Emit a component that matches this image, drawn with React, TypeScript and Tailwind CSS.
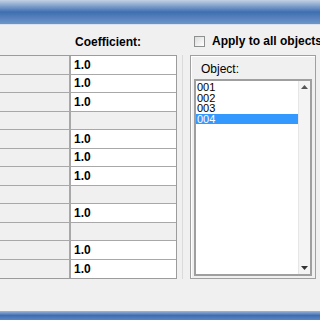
import React from 'react';

const rows = ['1.0', '1.0', '1.0', '', '1.0', '1.0', '1.0', '', '1.0', '', '1.0', '1.0'];
const items = ['001', '002', '003', '004'];

export default function App() {
  return (
    <div className="w-[320px] h-[320px] overflow-hidden bg-[#f0f0f0] flex flex-col font-['Liberation_Sans',Arial,sans-serif] text-black">
      {/* title bar */}
      <div className="h-[25px] shrink-0 bg-gradient-to-b from-[#c3d1e4] via-[#3f6fb0] to-[#6d95c9] border-b border-[#d9e2ee]" />

      <div className="flex flex-1">
        {/* coefficient table */}
        <div className="w-[190px] shrink-0 flex flex-col">
          <div className="h-[30px] flex items-center pl-[75px] pt-[4px] text-[12px] font-bold">Coefficient:</div>
          <div className="flex">
            <div className="w-[177px] border-t border-b border-r border-[#9c9c9c]">
              {rows.map((v, i) => (
                <div key={i} className="h-[18.5px] flex border-b border-[#a8a8a8] last:border-b-0">
                  <div className="w-[71px] bg-[#f0f0f0] border-r-2 border-[#a8a8a8]" />
                  <div className={`flex-1 flex items-center pl-[3px] text-[12px] font-bold ${v ? 'bg-white' : 'bg-[#f0f0f0]'}`}>{v}</div>
                </div>
              ))}
            </div>
            <div className="w-[5px] ml-[1px] border-r border-[#dadada]" />
          </div>
        </div>

        {/* right side */}
        <div className="flex-1 flex flex-col">
          <div className="h-[30px] flex items-center gap-[7px] pl-[4px] pt-[2px]">
            <div className="w-[11px] h-[11px] border border-[#8e8f8f] bg-gradient-to-br from-[#dcdcdc] to-white" />
            <span className="text-[12px] font-bold whitespace-nowrap">Apply to all objects</span>
          </div>
          <div className="w-[126px] h-[224px] border border-[#a0a0a0] shadow-[inset_1px_1px_0_#fff] flex flex-col px-[3px]">
            <div className="h-[22px] flex items-end pl-[7px] text-[12px]">Object:</div>
            <div className="flex-1 mt-[1px] mb-[2px] border-2 border-[#9f9f9f] bg-white flex">
              <div className="flex-1 pt-[1px] text-[11px] leading-[10.5px] font-['Arial_Narrow','Liberation_Sans_Narrow','Liberation_Sans',sans-serif]">
                {items.map((it) => (
                  <div key={it} className={`pl-[1px] h-[10.5px] ${it === '004' ? 'bg-[#3399ff] text-white' : ''}`}>{it}</div>
                ))}
              </div>
              <div className="w-[12px] bg-[#f4f4f4] border-l border-[#e6e6e6] flex flex-col justify-between items-center py-[4px]">
                <svg width="7" height="4" viewBox="0 0 7 4"><path d="M3.5 0L7 4H0z" fill="#555" /></svg>
                <svg width="7" height="4" viewBox="0 0 7 4"><path d="M0 0h7L3.5 4z" fill="#333" /></svg>
              </div>
            </div>
          </div>
        </div>
      </div>

      {/* bottom taskbar edge */}
      <div className="h-[9px] shrink-0 bg-gradient-to-b from-[#9db7da] via-[#3f6db0] to-[#5a86c2]" />
    </div>
  );
}
